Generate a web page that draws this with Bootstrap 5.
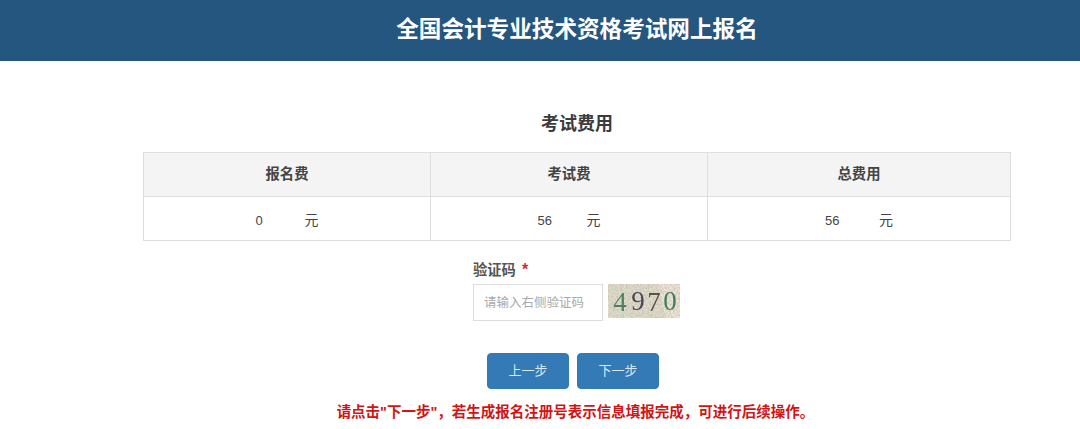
<!DOCTYPE html>
<html lang="zh-CN">
<head>
<meta charset="utf-8">
<title>全国会计专业技术资格考试网上报名</title>
<link href="https://cdn.jsdelivr.net/npm/bootstrap@5.3.0/dist/css/bootstrap.min.css" rel="stylesheet">
<style>
html, body { height: 429px; overflow: hidden; }
body { font-family: "Liberation Sans", "Noto Sans CJK SC", sans-serif; color: #444; background: #fff; }
.top-band { height: 61px; background: #25567f; color: #fff; padding: 0 0 2px 74px; font-size: 22.6px; font-weight: 700; }
.sheet { width: 868px; margin-left: 143px; }
.fee-title { font-size: 18px; font-weight: 700; color: #3c3c3c; margin: 0; padding-top: 51px; line-height: 25px; height: 91px; }
.fee-table { table-layout: fixed; margin: 0; border-color: #dedede; font-size: 14.3px; color: #444; }
.fee-table > :not(caption) > * > * { padding: 0; vertical-align: middle; text-align: center; box-shadow: none; }
.fee-table th { height: 44px; padding-top: 1px; background: #f4f4f4; font-weight: 700; }
.fee-table td { height: 44px; padding-top: 3px; font-size: 14px; }
.col-a { width: 287px; }
.col-b { width: 277px; }
.amount { display: inline-block; width: 49px; text-align: left; font-size: 13px; }
.amount-wide { width: 54px; }
.code-area { width: 208px; margin-left: 330px; padding-top: 19px; }
.code-label { font-size: 14.3px; font-weight: 700; color: #555; line-height: 20px; height: 24px; margin: 0; }
.code-label span { color: #c9302c; margin-left: 2px; font-size: 16px; }
.code-input { width: 130px; height: 37px; border: 1px solid #ddd; border-radius: 0; font-size: 12.5px; padding: 0 10px; box-shadow: none; }
.code-input::placeholder { color: #aaa; }
.captcha-pic { width: 72px; height: 34px; margin: 0 0 3px 5px; display: block; }
.step-row { margin-top: 32px; padding-right: 8px; }
.step-btn { width: 82px; height: 36px; padding: 0; background: #337ab7; border: 1px solid #3379b5; border-radius: 4px; color: #dbe9f5; font-size: 13px; }
.notice { margin: 13px 0 0; padding-right: 3px; color: #d01515; font-size: 14.5px; font-weight: 700; line-height: 20px; white-space: nowrap; }
</style>
</head>
<body>
<header class="top-band d-flex align-items-center justify-content-center">全国会计专业技术资格考试网上报名</header>
<main class="sheet">
  <h2 class="fee-title text-center">考试费用</h2>
  <table class="table table-bordered fee-table">
    <colgroup><col class="col-a"><col class="col-b"><col></colgroup>
    <thead>
      <tr><th>报名费</th><th>考试费</th><th>总费用</th></tr>
    </thead>
    <tbody>
      <tr>
        <td><span class="amount">0</span>元</td>
        <td><span class="amount">56</span>元</td>
        <td><span class="amount amount-wide">56</span>元</td>
      </tr>
    </tbody>
  </table>
  <div class="code-area">
    <p class="code-label">验证码 <span>*</span></p>
    <div class="d-flex align-items-start">
      <input class="form-control code-input flex-shrink-0" type="text" placeholder="请输入右侧验证码">
      <svg class="captcha-pic flex-shrink-0" viewBox="0 0 72 34" role="img" aria-label="4970">
        <defs>
          <filter id="speckle" x="0" y="0" width="100%" height="100%">
            <feTurbulence type="fractalNoise" baseFrequency=".55" numOctaves="2" seed="7"/>
            <feColorMatrix values="0 0 0 0 .45  0 0 0 0 .44  0 0 0 0 .36  1.6 0 0 0 -.62"/>
          </filter>
          <filter id="soft"><feGaussianBlur stdDeviation=".35"/></filter>
        </defs>
        <rect width="72" height="34" fill="#e0dccb"/>
        <path d="M50 0 H72 V34 H58Z" fill="#efe3d6"/>
        <rect width="72" height="34" filter="url(#speckle)"/>
        <g font-family="Liberation Serif, serif" font-size="27" text-anchor="middle" filter="url(#soft)">
          <text x="12" y="27" fill="#4d8260">4</text>
          <text x="30" y="26" fill="#4f4658">9</text>
          <text x="46" y="27" fill="#5c4f48">7</text>
          <text x="62" y="26" fill="#3d7f5c">0</text>
        </g>
      </svg>
    </div>
  </div>
  <div class="step-row d-flex justify-content-center gap-2">
    <button type="button" class="btn step-btn">上一步</button>
    <button type="button" class="btn step-btn">下一步</button>
  </div>
  <p class="notice text-center">请点击"下一步"，若生成报名注册号表示信息填报完成，可进行后续操作。</p>
</main>
<script src="https://cdn.jsdelivr.net/npm/bootstrap@5.3.0/dist/js/bootstrap.bundle.min.js"></script>
</body>
</html>
